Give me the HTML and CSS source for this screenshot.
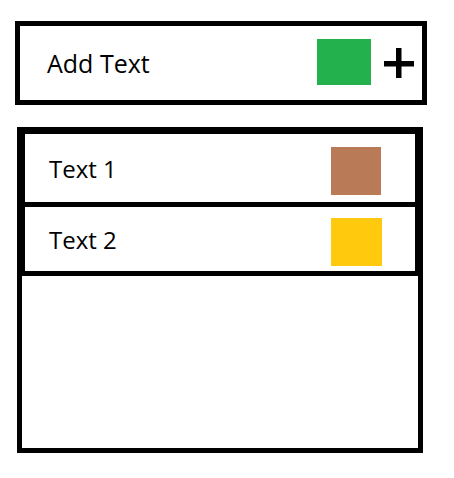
FILE: index.html
```html
<!DOCTYPE html>
<html lang="en">
<head>
    <meta charset="UTF-8">
    <meta name="viewport" content="width=device-width, initial-scale=1.0">
    <title>Text List</title>
    <link rel="stylesheet" href="styles.css">
</head>
<body>
    <!-- Add bar -->
    <div class="add-bar">
        <span class="add-label">Add Text</span>
        <span class="swatch swatch-green"></span>
        <button class="add-btn" aria-label="Add">
            <svg width="30" height="30" viewBox="0 0 30 30">
                <rect x="12" y="0" width="5.5" height="30" fill="#000"/>
                <rect x="0" y="13" width="30" height="5.5" fill="#000"/>
            </svg>
        </button>
    </div>

    <!-- Text list -->
    <div class="list">
        <div class="item">
            <span class="item-text">Text 1</span>
            <span class="swatch swatch-brown"></span>
        </div>
        <div class="item">
            <span class="item-text">Text 2</span>
            <span class="swatch swatch-yellow"></span>
        </div>
    </div>
</body>
</html>
```

FILE: styles.css
```css
/* General Reset */
* {
    box-sizing: border-box;
    margin: 0;
    padding: 0;
}
body {
    background: #fff;
    padding: 21px 0 0 15px;
    font-family: "Open Sans", "Noto Sans", Arial, sans-serif;
    color: #000;
}

/* Add bar */
.add-bar {
    display: flex;
    align-items: center;
    width: 412px;
    height: 84px;
    border: 5px solid #000;
    padding: 0 8px 0 27px;
}
.add-label {
    flex: 1;
    font-size: 25px;
}
.swatch {
    display: block;
    width: 50px;
    height: 48px;
}
.swatch-green {
    width: 54px;
    height: 46px;
    margin: -3px 13px 0 0;
    background: #22b14c;
}
.swatch-brown {
    background: #b97a57;
}
.swatch-yellow {
    width: 51px;
    background: #ffc90e;
}
.add-btn {
    display: flex;
    border: none;
    background: none;
    cursor: pointer;
}

/* List */
.list {
    width: 406px;
    height: 326px;
    margin: 22px 0 0 2px;
    border: 5px solid #000;
}
.item {
    display: flex;
    align-items: center;
    justify-content: space-between;
    height: 69px;
    padding: 0 34px 0 24px;
    border: solid #000;
    border-width: 0 3px 5px;
}
.item:first-child {
    height: 75px;
    border-top-width: 2px;
}
.item-text {
    font-size: 24px;
}
.item .swatch {
    margin-top: 5px;
}
.item .swatch-yellow {
    margin-right: -1px;
}
```
